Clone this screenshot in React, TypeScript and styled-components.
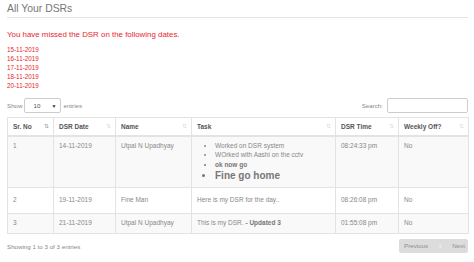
import styled, { createGlobalStyle } from 'styled-components'

const GlobalStyle = createGlobalStyle`
  html, body {
    margin: 0;
    padding: 0;
    background: #fff;
  }
  body {
    font-family: 'Liberation Sans', Arial, Helvetica, sans-serif;
    color: #777;
  }
`

const Page = styled.div`
  width: 474px;
  height: 262px;
  box-sizing: border-box;
  padding: 0 6px 0 7px;
  overflow: hidden;
`

const Title = styled.div`
  font-size: 10.4px;
  line-height: 12px;
  color: #777;
  padding: 3px 0 2px;
  border-bottom: 1px solid #e5e5e5;
`

const Missed = styled.div`
  margin-top: 12px;
  color: #e8262d;
  font-size: 7.9px;
  line-height: 10px;
`

const DateList = styled.div`
  margin-top: 5px;
  display: flex;
  flex-direction: column;
  font-size: 6.3px;
  line-height: 9px;
  color: #e8262d;
`

const Controls = styled.div`
  margin-top: 8px;
  display: flex;
  align-items: center;
  justify-content: space-between;
  font-size: 6.2px;
  color: #888;
`

const Label = styled.label`
  display: flex;
  align-items: center;
  gap: 2px;
`

const Select = styled.div`
  width: 37px;
  height: 15px;
  box-sizing: border-box;
  border: 1px solid #ccc;
  border-radius: 2px;
  display: flex;
  align-items: center;
  justify-content: space-between;
  padding: 0 4px 0 8px;
  color: #555;
  font-size: 6.2px;
`

const Caret = styled.span`
  font-size: 5px;
  color: #333;
`

const SearchBox = styled.div`
  width: 81px;
  height: 15px;
  box-sizing: border-box;
  border: 1px solid #ccc;
  border-radius: 2px;
  margin-left: 2px;
`

const Table = styled.table`
  margin-top: 4px;
  width: 100%;
  border-collapse: collapse;
  font-size: 6.5px;
  line-height: 9.3px;
  table-layout: fixed;
`

const Th = styled.th<{ $w: number }>`
  width: ${({ $w }) => $w}px;
  box-sizing: border-box;
  text-align: left;
  font-weight: bold;
  color: #555;
  padding: 4px 4px 4px 5px;
  border: 1px solid #e3e3e3;
  border-bottom-width: 2px;
  position: relative;
`

const SortIcon = styled.span<{ $active?: boolean }>`
  position: absolute;
  right: 5px;
  top: 4px;
  font-weight: normal;
  color: ${({ $active }) => ($active ? '#9a9a9a' : '#ddd')};
  font-size: 6px;
  letter-spacing: -1px;
`

const Tr = styled.tr<{ $odd?: boolean }>`
  background: ${({ $odd }) => ($odd ? '#f9f9f9' : '#fff')};
`

const Td = styled.td`
  vertical-align: top;
  padding: 3.8px 4px 3.8px 5px;
  border: 1px solid #e3e3e3;
  color: #888;
`

const CellText = styled.p<{ $top?: number; $bottom?: number }>`
  margin: ${({ $top }) => $top ?? 0}px 0 ${({ $bottom }) => $bottom ?? 4.7}px;
`

const TaskList = styled.ul`
  margin: 0 0 1px;
  padding-left: 18px;
`

const Item = styled.li<{ $bold?: boolean; $big?: boolean }>`
  font-weight: ${({ $bold }) => ($bold ? 'bold' : 'normal')};
  font-size: ${({ $big }) => ($big ? '10px' : 'inherit')};
  line-height: ${({ $big }) => ($big ? '12px' : 'inherit')};
  margin-top: ${({ $big }) => ($big ? '1.5px' : '0')};
  color: ${({ $bold }) => ($bold ? '#777' : '#888')};
`

const Footer = styled.div`
  margin-top: 5px;
  display: flex;
  justify-content: space-between;
  align-items: center;
  font-size: 6.2px;
  color: #888;
`

const Info = styled.div`
  padding-top: 1px;
`

const Pager = styled.div`
  width: 69px;
  height: 14px;
  background: #dcdcdc;
  border-radius: 2px;
  display: flex;
  align-items: center;
  justify-content: space-between;
  padding: 0 3px 0 5px;
  box-sizing: border-box;
  color: #8e8e8e;
  font-size: 6.2px;
`

const PageNum = styled.span`
  color: #f2f2f2;
`

const Bold = styled.b`
  color: #777;
`

const headers = [
  { label: 'Sr. No', w: 46, active: true },
  { label: 'DSR Date', w: 62 },
  { label: 'Name', w: 76 },
  { label: 'Task', w: 144 },
  { label: 'DSR Time', w: 63 },
  { label: 'Weekly Off?', w: 70 },
]

const missedDates = ['15-11-2019', '16-11-2019', '17-11-2019', '18-11-2019', '20-11-2019']

export default function App() {
  return (
    <Page>
      <GlobalStyle />
      <Title>All Your DSRs</Title>
      <Missed>You have missed the DSR on the following dates.</Missed>
      <DateList>
        {missedDates.map((d) => (
          <span key={d}>{d}</span>
        ))}
      </DateList>
      <Controls>
        <Label>
          Show
          <Select>
            10 <Caret>▼</Caret>
          </Select>
          entries
        </Label>
        <Label>
          Search:
          <SearchBox />
        </Label>
      </Controls>
      <Table>
        <thead>
          <tr>
            {headers.map((h) => (
              <Th key={h.label} $w={h.w}>
                {h.label}
                <SortIcon $active={h.active}>⇅</SortIcon>
              </Th>
            ))}
          </tr>
        </thead>
        <tbody>
          <Tr $odd>
            <Td>1</Td>
            <Td>14-11-2019</Td>
            <Td>Utpal N Upadhyay</Td>
            <Td>
              <TaskList>
                <Item>Worked on DSR system</Item>
                <Item>WOrked with Aashi on the cctv</Item>
                <Item $bold>ok now go</Item>
                <Item $bold $big>
                  Fine go home
                </Item>
              </TaskList>
            </Td>
            <Td>08:24:33 pm</Td>
            <Td>No</Td>
          </Tr>
          <Tr>
            <Td>
              <CellText $top={3}>2</CellText>
            </Td>
            <Td>
              <CellText $top={3}>19-11-2019</CellText>
            </Td>
            <Td>
              <CellText $top={3}>Fine Man</CellText>
            </Td>
            <Td>
              <CellText $top={3}>Here is my DSR for the day..</CellText>
            </Td>
            <Td>
              <CellText $top={3}>08:26:08 pm</CellText>
            </Td>
            <Td>
              <CellText $top={3}>No</CellText>
            </Td>
          </Tr>
          <Tr $odd>
            <Td>
              <CellText $bottom={2}>3</CellText>
            </Td>
            <Td>
              <CellText $bottom={2}>21-11-2019</CellText>
            </Td>
            <Td>
              <CellText $bottom={2}>Utpal N Upadhyay</CellText>
            </Td>
            <Td>
              <CellText $bottom={2}>
                This is my DSR. <Bold>- Updated 3</Bold>
              </CellText>
            </Td>
            <Td>
              <CellText $bottom={2}>01:55:08 pm</CellText>
            </Td>
            <Td>
              <CellText $bottom={2}>No</CellText>
            </Td>
          </Tr>
        </tbody>
      </Table>
      <Footer>
        <Info>Showing 1 to 3 of 3 entries</Info>
        <Pager>
          <span>Previous</span>
          <PageNum>1</PageNum>
          <span>Next</span>
        </Pager>
      </Footer>
    </Page>
  )
}
